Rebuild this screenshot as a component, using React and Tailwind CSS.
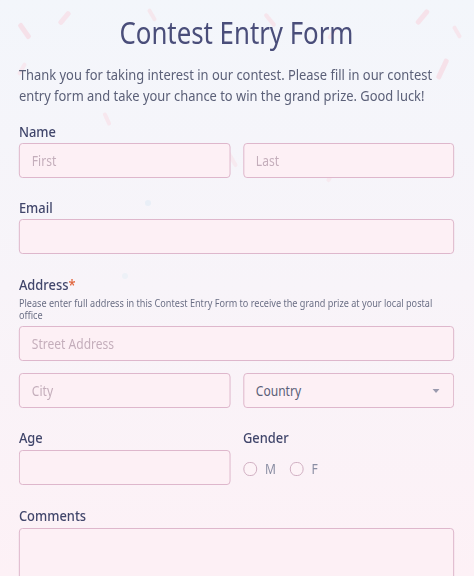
import React from "react";

function Confetti() {
  const pieces = [
    [22, 22, 5, 18, -35, "#f7d3de"],
    [62, 10, 5, 16, 40, "#f8d9e2"],
    [150, 8, 4, 14, -30, "#f6dde5"],
    [268, 12, 4, 16, -40, "#f8dbe3"],
    [330, 28, 4, 12, 35, "#f8dee6"],
    [420, 8, 5, 18, 40, "#f8d6df"],
    [455, 25, 4, 14, -30, "#f8dce4"],
    [440, 58, 5, 22, 25, "#f7d4de"],
    [20, 62, 4, 14, 30, "#f8e0e7"],
    [105, 112, 4, 14, -25, "#f8dde6"],
    [230, 150, 4, 18, -30, "#f9e3ea"],
    [330, 165, 4, 18, 30, "#f9e3ea"],
  ];
  return (
    <svg className="absolute inset-0 pointer-events-none" width="474" height="576">
      {pieces.map(([x, y, w, h, r, c], i) => (
        <rect key={i} x={x} y={y} width={w} height={h} rx="2" fill={c} opacity="0.6" transform={`rotate(${r} ${x + w / 2} ${y + h / 2})`} />
      ))}
      <circle cx="148" cy="203" r="3" fill="#e9eff7" />
      <circle cx="125" cy="276" r="3" fill="#edf1f7" />
    </svg>
  );
}

const inputCls =
  "block w-full h-[35px] rounded-[4px] border border-[#dbb3c8] bg-[#fdf0f5] px-[14px] text-[14px] text-[#5b6078] placeholder:text-[#c4aebb] outline-none";

function Label({ children, className = "" }) {
  return (
    <div className={`text-[15px] leading-[20px] font-[550] text-[#41466b] ${className}`}>{children}</div>
  );
}

function Radio({ label }) {
  return (
    <div className="flex items-center">
      <span className="w-[16.5px] h-[14px] rounded-full border border-[#ccaabd] bg-[#fdf3f7]" />
      <span className="ml-[9px] text-[14px] text-[#8a8ea3]">{label}</span>
    </div>
  );
}

export default function App() {
  return (
    <div
      className="relative w-[474px] h-[576px] overflow-hidden bg-gradient-to-b from-[#f3f6fb] via-[#f8f4f9] to-[#fdf1f6]"
      style={{ fontFamily: '"Noto Sans", "Open Sans", sans-serif' }}
    >
      <Confetti />
      <div className="relative w-[551px] origin-top-left scale-x-[0.86] pl-[22px] pr-[23px] pt-[13px]">
        <h1 className="text-center text-[30px] leading-[40px] font-normal text-[#4a4e7a]">Contest Entry Form</h1>
        <p className="mt-[11px] text-[15px] leading-[21px] text-[#5b6078]">
          Thank you for taking interest in our contest. Please fill in our contest entry form and take your chance to win the grand prize. Good luck!
        </p>

        <Label className="mt-[15px]">Name</Label>
        <div className="mt-[2px] grid grid-cols-2 gap-[15px]">
          <input className={inputCls} placeholder="First" />
          <input className={inputCls} placeholder="Last" />
        </div>

        <Label className="mt-[19px]">Email</Label>
        <input className={`${inputCls} mt-[2px]`} />

        <Label className="mt-[20px]">
          Address<span className="text-[#e0633a]">*</span>
        </Label>
        <p className="mt-[3px] text-[10.6px] leading-[12px] text-[#6b6f85]">
          Please enter full address in this Contest Entry Form to receive the grand prize at your local postal office
        </p>
        <input className={`${inputCls} mt-[5px]`} placeholder="Street Address" />
        <div className="mt-[12px] grid grid-cols-2 gap-[15px]">
          <input className={inputCls} placeholder="City" />
          <div className={`${inputCls} flex items-center justify-between`}>
            <span className="text-[14px] text-[#5b6078]">Country</span>
            <span className="w-0 h-0 border-l-[4px] border-r-[4px] border-t-[4px] border-l-transparent border-r-transparent border-t-[#9a9aae] mr-[2px]" />
          </div>
        </div>

        <div className="mt-[19px] grid grid-cols-2 gap-[15px]">
          <div>
            <Label>Age</Label>
            <input className={`${inputCls} mt-[3px]`} />
          </div>
          <div>
            <Label>Gender</Label>
            <div className="mt-[11px] flex items-center gap-[16px]">
              <Radio label="M" />
              <Radio label="F" />
            </div>
          </div>
        </div>

        <Label className="mt-[20px]">Comments</Label>
        <textarea className="mt-[3px] block w-full h-[80px] rounded-[4px] border border-[#dbb3c8] bg-[#fdf0f5] outline-none resize-none" />
      </div>
    </div>
  );
}
